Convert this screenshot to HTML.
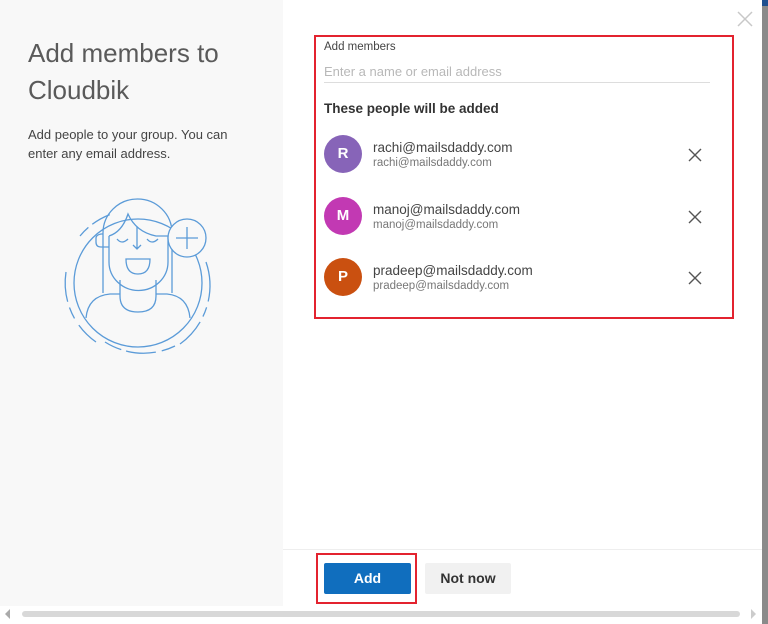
<!DOCTYPE html>
<html><head><meta charset="utf-8"><style>
*{margin:0;padding:0;box-sizing:border-box}
body{width:768px;height:624px;overflow:hidden;background:#fff;font-family:"Liberation Sans",sans-serif;position:relative;color:#333}
.left{position:absolute;left:0;top:0;width:283px;height:606px;background:#f8f8f8}
h1{position:absolute;left:28px;top:35px;font-weight:normal;font-size:26px;line-height:37px;color:#5a5a5a}
.desc{position:absolute;left:28px;top:125px;font-size:13px;line-height:19px;color:#444;width:222px}
.strip{position:absolute;left:762px;top:0;width:6px;height:624px;background:#8a8a8a}
.strip:before{content:"";position:absolute;left:0;top:0;width:6px;height:6px;background:#1e4f8f}
.close{position:absolute;left:736px;top:10px}
.box{position:absolute;left:314px;top:35px;width:420px;height:284px;border:2px solid #e3232f}
.lbl{position:absolute;left:324px;top:41px;font-size:11.5px;color:#444}
.inp{position:absolute;left:324px;top:64px;font-size:13px;color:#b8b8b8}
.line{position:absolute;left:324px;top:82px;width:386px;height:1px;background:#ddd}
.hd{position:absolute;left:324px;top:101px;font-size:13.5px;font-weight:bold;color:#333}
.p{position:absolute;left:324px;width:400px;height:40px}
.av{position:absolute;left:0;top:0;width:38px;height:38px;border-radius:50%;color:#fff;font-weight:bold;font-size:15px;text-align:center;line-height:38px}
.n1{position:absolute;left:49px;top:5px;font-size:13.5px;color:#444}
.n2{position:absolute;left:49px;top:22px;font-size:11.5px;color:#777}
.x{position:absolute;left:364px;top:13px}
.foot{position:absolute;left:283px;top:549px;width:479px;height:1px;background:#eee}
.addb{position:absolute;left:316px;top:553px;width:101px;height:51px;border:2px solid #e3232f}
.add{position:absolute;left:324px;top:563px;width:87px;height:31px;background:#106ebe;color:#fff;font-weight:bold;font-size:14px;text-align:center;line-height:31px;border-radius:2px}
.not{position:absolute;left:425px;top:563px;width:86px;height:31px;background:#f1f1f1;color:#333;font-weight:bold;font-size:14px;text-align:center;line-height:31px;border-radius:2px}
.sb{position:absolute;left:22px;top:611px;width:718px;height:6px;background:#d8d8d8;border-radius:3px}
</style></head><body>
<div class="left"></div>
<h1>Add members to<br>Cloudbik</h1>
<div class="desc">Add people to your group. You can enter any email address.</div>
<svg style="position:absolute;left:0;top:0" width="283" height="606" fill="none" stroke="#5b9bd8" stroke-width="1.3">
<circle cx="138" cy="283" r="64"/>
<path d="M66 272 A72 72 0 0 0 96 342" stroke-dasharray="30 6 12 8"/>
<path d="M206 262 A72 72 0 0 1 180 344" stroke-dasharray="40 6 10 6"/>
<path d="M105 342 A72 72 0 0 0 175 346" stroke-dasharray="18 5 30 6"/>
<path d="M80 236 A72 72 0 0 1 118 212" stroke-dasharray="12 5 20"/>
<path d="M103 293 L103 233 A34.5 34 0 0 1 172 233 L172 293"/>
<path d="M109 236 L109 262 A29 28 0 0 0 168 262 L168 236 L156 236 Q136 232 128 214 Q122 232 109 236"/>
<path d="M109 247 L101 247 Q96 247 96 242 L96 238 Q96 235 101 234 L103 234"/>
<path d="M120 280 L120 296 Q120 312 138 312 Q156 312 156 296 L156 280"/>
<path d="M86 318 Q88 296 110 294 L120 294 M156 294 L167 294 Q188 296 190 318"/>
<path d="M137 227 L137 248 M133 245 L137 249 L141 245"/>
<path d="M117 239 Q122 245 128 239 M147 239 Q152 245 158 239"/>
<path d="M126 259 L150 259 Q150 274 138 274 Q126 274 126 259 Z"/>
<circle cx="187" cy="238" r="19" fill="#f8f8f8"/>
<path d="M187 227 L187 249 M176 238 L198 238"/>
</svg>
<div class="strip"></div>
<svg class="close" width="18" height="18" stroke="#c8c8c8" stroke-width="1.5"><path d="M2 2 L16 16 M16 2 L2 16"/></svg>
<div class="box"></div>
<div class="lbl">Add members</div>
<div class="inp">Enter a name or email address</div>
<div class="line"></div>
<div class="hd">These people will be added</div>
<div class="p" style="top:135px"><div class="av" style="background:#8764b8">R</div><div class="n1">rachi@mailsdaddy.com</div><div class="n2">rachi@mailsdaddy.com</div><svg class="x" width="14" height="14" stroke="#555" stroke-width="1.4"><path d="M1 1 L13 13 M13 1 L1 13"/></svg></div>
<div class="p" style="top:197px"><div class="av" style="background:#c239b3">M</div><div class="n1">manoj@mailsdaddy.com</div><div class="n2">manoj@mailsdaddy.com</div><svg class="x" width="14" height="14" stroke="#555" stroke-width="1.4"><path d="M1 1 L13 13 M13 1 L1 13"/></svg></div>
<div class="p" style="top:258px"><div class="av" style="background:#ca5010">P</div><div class="n1">pradeep@mailsdaddy.com</div><div class="n2">pradeep@mailsdaddy.com</div><svg class="x" width="14" height="14" stroke="#555" stroke-width="1.4"><path d="M1 1 L13 13 M13 1 L1 13"/></svg></div>
<div class="foot"></div>
<div class="addb"></div>
<div class="add">Add</div>
<div class="not">Not now</div>
<svg style="position:absolute;left:5px;top:609px" width="6" height="10"><path d="M5 0 L0 5 L5 10Z" fill="#aaa"/></svg>
<div class="sb"></div>
<svg style="position:absolute;left:751px;top:609px" width="6" height="10"><path d="M0 0 L5 5 L0 10Z" fill="#ccc"/></svg>
</body></html>
